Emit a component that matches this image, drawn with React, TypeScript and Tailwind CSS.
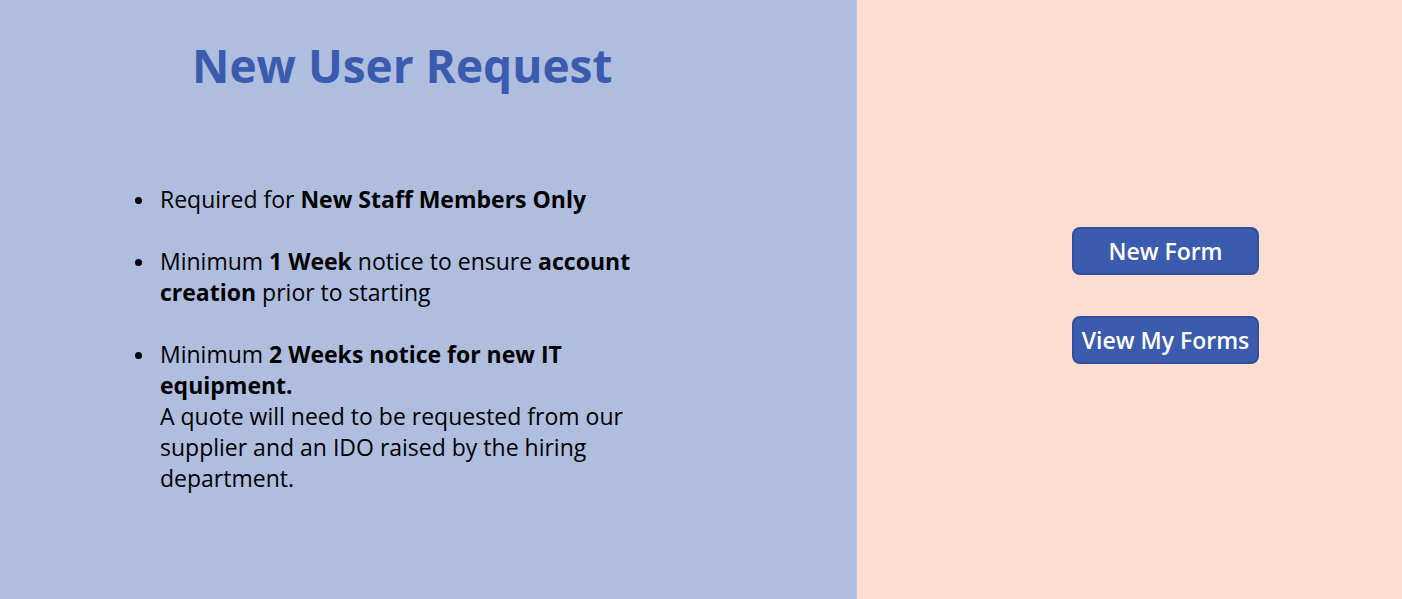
export default function App() {
  return (
    <div
      className="flex w-full h-[599px] overflow-hidden"
      style={{ fontFamily: '"Open Sans", "Liberation Sans", sans-serif' }}
    >
      <div className="w-[857px] h-full bg-[#AFBDDF] border-r border-[#bcc7e4] flex flex-col">
        <h1 className="pt-[29px] pl-[192px] text-[46px] leading-[72px] font-bold text-[#3A5BAE]">
          New User Request
        </h1>
        <ul className="mt-[83px] pl-[160px] w-[660px] text-[23px] leading-[31px] text-black flex flex-col gap-[31px]">
          <li className="relative">
            <span className="absolute left-[-25px] top-[13px] w-[7px] h-[7px] rounded-full bg-black" />
            Required for <b>New Staff Members Only</b>
          </li>
          <li className="relative">
            <span className="absolute left-[-25px] top-[13px] w-[7px] h-[7px] rounded-full bg-black" />
            Minimum <b>1 Week</b> notice to ensure <b>account creation</b> prior to starting
          </li>
          <li className="relative">
            <span className="absolute left-[-25px] top-[13px] w-[7px] h-[7px] rounded-full bg-black" />
            Minimum <b>2 Weeks notice for new IT equipment.</b>
            <br />
            A quote will need to be requested from our supplier and an IDO raised by the hiring
            department.
          </li>
        </ul>
      </div>
      <div className="flex-1 h-full bg-[#FEDED2] flex flex-col pl-[215px] pt-[227px] gap-[41px]">
        <button className="w-[187px] h-[48px] rounded-[8px] bg-[#3A5BAE] border-2 border-[#2F4E9C] text-white text-[23px] font-semibold">
          New Form
        </button>
        <button className="w-[187px] h-[48px] rounded-[8px] bg-[#3A5BAE] border-2 border-[#2F4E9C] text-white text-[23px] font-semibold">
          View My Forms
        </button>
      </div>
    </div>
  );
}
